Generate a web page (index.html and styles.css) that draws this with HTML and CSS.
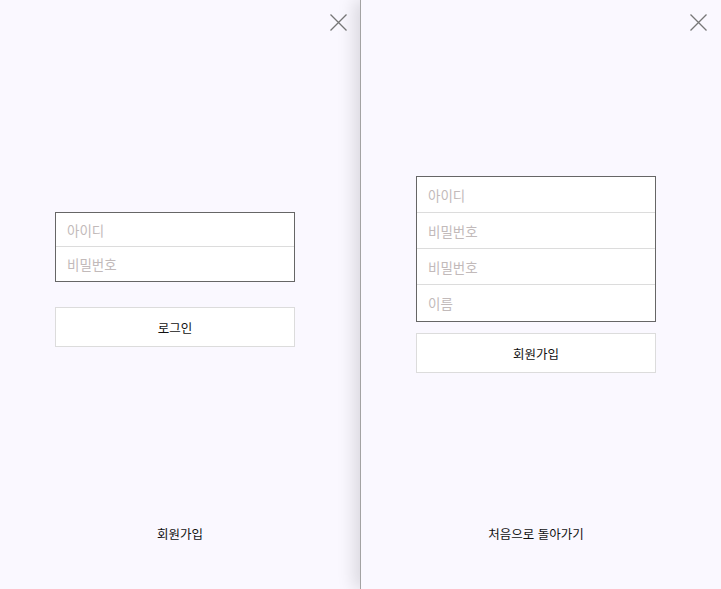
FILE: index.html
```html
<!DOCTYPE html>
<html lang="ko">
<head>
<meta charset="utf-8">
<title>로그인</title>
<link rel="stylesheet" href="styles.css">
</head>
<body>
<div class="screen">
  <section class="panel panel-login">
    <div class="panel-head">
      <button class="close" aria-label="닫기">
        <svg width="17" height="17" viewBox="0 0 17 17"><path d="M0.5 0.5 L16.5 16.5 M16.5 0.5 L0.5 16.5" stroke="#777" stroke-width="1.3" fill="none"/></svg>
      </button>
    </div>
    <div class="panel-main main-login">
      <div class="field-box rows-login">
        <input class="field" type="text" placeholder="아이디">
        <input class="field" type="password" placeholder="비밀번호">
      </div>
      <button class="action action-login">로그인</button>
    </div>
    <div class="panel-foot">
      <a class="foot-link">회원가입</a>
    </div>
  </section>
  <section class="panel panel-signup">
    <div class="panel-head">
      <button class="close" aria-label="닫기">
        <svg width="17" height="17" viewBox="0 0 17 17"><path d="M0.5 0.5 L16.5 16.5 M16.5 0.5 L0.5 16.5" stroke="#777" stroke-width="1.3" fill="none"/></svg>
      </button>
    </div>
    <div class="panel-main main-signup">
      <div class="field-box rows-signup">
        <input class="field" type="text" placeholder="아이디">
        <input class="field" type="password" placeholder="비밀번호">
        <input class="field" type="password" placeholder="비밀번호">
        <input class="field" type="text" placeholder="이름">
      </div>
      <button class="action action-signup">회원가입</button>
    </div>
    <div class="panel-foot foot-signup">
      <a class="foot-link">처음으로 돌아가기</a>
    </div>
  </section>
</div>
</body>
</html>
```

FILE: styles.css
```css
html, body {
  margin: 0;
  padding: 0;
  background: #faf8ff;
}
body {
  font-family: "Noto Sans CJK KR", "Noto Sans", sans-serif;
  color: #111;
}
.screen {
  display: flex;
  width: 721px;
  height: 589px;
  overflow: hidden;
}
.panel {
  display: flex;
  flex-direction: column;
  width: 360px;
  height: 589px;
  box-sizing: border-box;
  background: #faf8ff;
}
.panel-login {
  width: 360px;
}
.panel-signup {
  width: 361px;
  border-left: 1px solid #a3a3a3;
  box-shadow: -6px 0 16px rgba(0, 0, 0, 0.13);
  position: relative;
  z-index: 1;
}
.panel-head {
  display: flex;
  justify-content: flex-end;
  padding: 14px 13px 0 0;
  height: 17px;
}
.panel-signup .panel-head {
  padding-right: 14px;
}
.close {
  border: 0;
  padding: 0;
  margin: 0;
  background: none;
  width: 17px;
  height: 17px;
  display: block;
  cursor: pointer;
}
.close svg {
  display: block;
}
.panel-main {
  display: flex;
  flex-direction: column;
  padding-left: 55px;
}
.main-login {
  padding-top: 181px;
}
.main-signup {
  padding-top: 145px;
}
.field-box {
  width: 240px;
  box-sizing: border-box;
  border: 1px solid #666;
  background: #fff;
  display: flex;
  flex-direction: column;
}
.field {
  display: block;
  width: 100%;
  box-sizing: border-box;
  border: 0;
  border-bottom: 1px solid #dcdcdc;
  outline: none;
  background: #fff;
  padding: 0 11px;
  font-family: "Noto Sans CJK KR", "Noto Sans", sans-serif;
  font-size: 13.5px;
  color: #333;
  margin: 0;
}
.field:last-child {
  border-bottom: 0;
}
.field::placeholder {
  color: #c2baba;
}
.rows-login .field {
  height: 34px;
}
.rows-signup .field {
  height: 36px;
}
.action {
  width: 240px;
  height: 40px;
  box-sizing: border-box;
  border: 1px solid #dcdcdc;
  background: #fff;
  font-family: "Noto Sans CJK KR", "Noto Sans", sans-serif;
  font-size: 12.5px;
  color: #111;
  padding: 0;
  cursor: pointer;
}
.action-login {
  margin-top: 25px;
}
.action-signup {
  margin-top: 11px;
}
.panel-foot {
  margin-top: auto;
  padding-bottom: 47px;
  text-align: center;
  font-size: 12.5px;
  line-height: 16px;
}
.foot-signup {
  padding-right: 10px;
}
.foot-link {
  color: #111;
  text-decoration: none;
  cursor: pointer;
}
```
